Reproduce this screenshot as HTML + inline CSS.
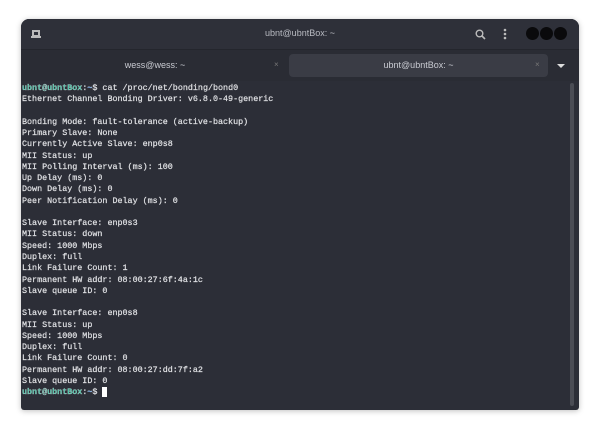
<!DOCTYPE html>
<html><head><style>
body{margin:0;width:600px;height:434px;background:#fff;overflow:hidden;position:relative;font-family:"Liberation Sans",sans-serif}
.win{position:absolute;left:21px;top:19px;width:558px;height:391px;background:#2c2e37;border-radius:8px 8px 3px 3px;box-shadow:0 1px 6px rgba(0,0,0,.25);overflow:hidden}
.tb{position:absolute;left:0;top:0;width:558px;height:30px;background:#2e3039;border-bottom:1px solid #24262d}
.title{position:absolute;left:0;right:0;top:9px;text-align:center;color:#b9bbc2;font-size:9px}
.tabs{position:absolute;top:31px;left:0;width:558px;height:31px;background:#2a2c34}
.tab{position:absolute;top:4px;height:23px;color:#c9cbd2;font-size:9px;line-height:23px;text-align:center}
.x{position:absolute;color:#777;font-size:8px}
.dot{position:absolute;top:8px;width:13px;height:13px;border-radius:50%;background:#0a0a0c}
pre{position:absolute;left:1px;top:64px;margin:0;font-family:"Liberation Mono",monospace;font-size:8.4px;line-height:11.27px;color:#e2e3e6;-webkit-text-stroke:0.2px #e2e3e6}
.g{color:#3ec2a2;font-weight:bold}.b{color:#4a8fe0;font-weight:bold}
.sb{position:absolute;left:549px;top:64px;width:4px;height:323px;background:#4b4d55;border-radius:2px}
</style></head><body>
<div class="win">
 <div class="tb">
  <svg style="position:absolute;left:10px;top:10px" width="10" height="9"><rect x="1" y="1" width="8" height="6" fill="#bbb"/><rect x="3" y="3" width="4" height="3" fill="#2e3039"/><rect x="0" y="7" width="10" height="2" fill="#bbb"/></svg>
  <div class="title">ubnt@ubntBox: ~</div>
  <svg style="position:absolute;left:454px;top:10px" width="11" height="11"><circle cx="4.5" cy="4.5" r="3.3" stroke="#bbb" stroke-width="1.4" fill="none"/><line x1="7" y1="7" x2="10" y2="10" stroke="#bbb" stroke-width="1.6"/></svg>
  <svg style="position:absolute;left:482px;top:9px" width="4" height="12"><circle cx="2" cy="2" r="1.3" fill="#bbb"/><circle cx="2" cy="6" r="1.3" fill="#bbb"/><circle cx="2" cy="10" r="1.3" fill="#bbb"/></svg>
  <div class="dot" style="left:505px"></div><div class="dot" style="left:519px"></div><div class="dot" style="left:533px"></div>
 </div>
 <div class="tabs">
  <div class="tab" style="left:0;width:268px">wess@wess: ~</div>
  <div class="x" style="left:253px;top:10px">×</div>
  <div class="tab" style="left:268px;width:259px;background:#3a3c45;border-radius:4px">ubnt@ubntBox: ~</div>
  <div class="x" style="left:514px;top:10px">×</div>
  <svg style="position:absolute;left:536px;top:14px" width="8" height="5"><path d="M0 0H8L4 4Z" fill="#ddd"/></svg>
 </div>
<pre><span class="g">ubnt@ubntBox</span>:<span class="b">~</span>$ cat /proc/net/bonding/bond0
Ethernet Channel Bonding Driver: v6.8.0-49-generic

Bonding Mode: fault-tolerance (active-backup)
Primary Slave: None
Currently Active Slave: enp0s8
MII Status: up
MII Polling Interval (ms): 100
Up Delay (ms): 0
Down Delay (ms): 0
Peer Notification Delay (ms): 0

Slave Interface: enp0s3
MII Status: down
Speed: 1000 Mbps
Duplex: full
Link Failure Count: 1
Permanent HW addr: 08:00:27:6f:4a:1c
Slave queue ID: 0

Slave Interface: enp0s8
MII Status: up
Speed: 1000 Mbps
Duplex: full
Link Failure Count: 0
Permanent HW addr: 08:00:27:dd:7f:a2
Slave queue ID: 0
<span class="g">ubnt@ubntBox</span>:<span class="b">~</span>$ <span style="background:#fff">&nbsp;</span></pre>
 <div class="sb"></div>
</div>
</body></html>
